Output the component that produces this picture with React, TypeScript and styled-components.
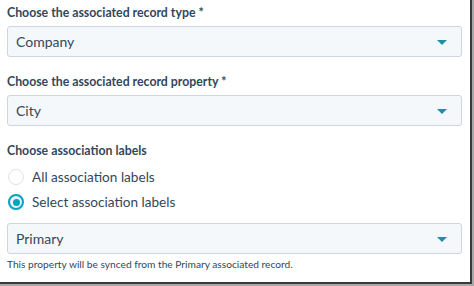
import React from "react";
import styled, { createGlobalStyle } from "styled-components";

const Global = createGlobalStyle`
  html, body { margin: 0; padding: 0; background: #ffffff; }
  body { font-family: "Lato", "Liberation Sans", sans-serif; color: #33475b; }
`;

const Frame = styled.div`
  width: 474px;
  height: 286px;
  box-sizing: border-box;
  border-right: 2px solid #a8a8a8;
  border-bottom: 2px solid #a8a8a8;
`;

const Panel = styled.div`
  width: 472px;
  height: 284px;
  box-sizing: border-box;
  border-right: 2px solid #3a3a3a;
  border-bottom: 2px solid #3a3a3a;
  background: #ffffff;
  padding: 5px 8px 0 7px;
  display: flex;
  flex-direction: column;
`;

const Field = styled.div<{ $gap: number }>`
  display: flex;
  flex-direction: column;
  margin-bottom: ${(p) => p.$gap}px;
`;

const Label = styled.div<{ $mb?: number }>`
  font-size: 12.3px;
  font-weight: 700;
  line-height: 16px;
  color: #33475b;
  margin-bottom: ${(p) => (p.$mb ?? 5)}px;
`;

const SelectBox = styled.div<{ $mt?: number }>`
  height: 31px;
  box-sizing: border-box;
  border: 1px solid #cbd6e2;
  border-radius: 3px;
  background: #f5f8fa;
  display: flex;
  align-items: center;
  justify-content: space-between;
  padding: 0 14px 0 8px;
  margin-top: ${(p) => p.$mt ?? 0}px;
  font-size: 14px;
  color: #33475b;
`;

const Caret = styled.span`
  width: 0;
  height: 0;
  border-left: 5px solid transparent;
  border-right: 5px solid transparent;
  border-top: 5px solid #1f8fa3;
  margin-top: 1px;
`;

const RadioGroup = styled.div`
  display: flex;
  flex-direction: column;
  gap: 9px;
`;

const RadioRow = styled.label`
  display: flex;
  align-items: center;
  gap: 8px;
  height: 16px;
  font-size: 13.6px;
  color: #33475b;
  padding-left: 1px;
`;

const RadioCircle = styled.span<{ $checked?: boolean }>`
  width: 16px;
  height: 16px;
  box-sizing: border-box;
  border-radius: 50%;
  border: ${(p) => (p.$checked ? "2px solid #00a4bd" : "1px solid #dfe3eb")};
  background: ${(p) => (p.$checked ? "#e5f5f8" : "#ffffff")};
  display: flex;
  align-items: center;
  justify-content: center;
  &::after {
    content: "";
    display: ${(p) => (p.$checked ? "block" : "none")};
    width: 7px;
    height: 7px;
    border-radius: 50%;
    background: #00a4bd;
  }
`;

const Help = styled.div`
  font-size: 10.2px;
  line-height: 13px;
  margin-top: 4px;
  color: #33475b;
`;

function Select({ value, mt }: { value: string; mt?: number }) {
  return (
    <SelectBox $mt={mt}>
      <span>{value}</span>
      <Caret />
    </SelectBox>
  );
}

export default function App() {
  return (
    <>
      <Global />
      <Frame>
        <Panel>
          <Field $gap={17}>
            <Label>Choose the associated record type *</Label>
            <Select value="Company" />
          </Field>
          <Field $gap={17}>
            <Label>Choose the associated record property *</Label>
            <Select value="City" />
          </Field>
          <Label $mb={10}>Choose association labels</Label>
          <RadioGroup>
            <RadioRow>
              <RadioCircle />
              All association labels
            </RadioRow>
            <RadioRow>
              <RadioCircle $checked />
              Select association labels
            </RadioRow>
          </RadioGroup>
          <Select value="Primary" mt={13} />
          <Help>This property will be synced from the Primary associated record.</Help>
        </Panel>
      </Frame>
    </>
  );
}
